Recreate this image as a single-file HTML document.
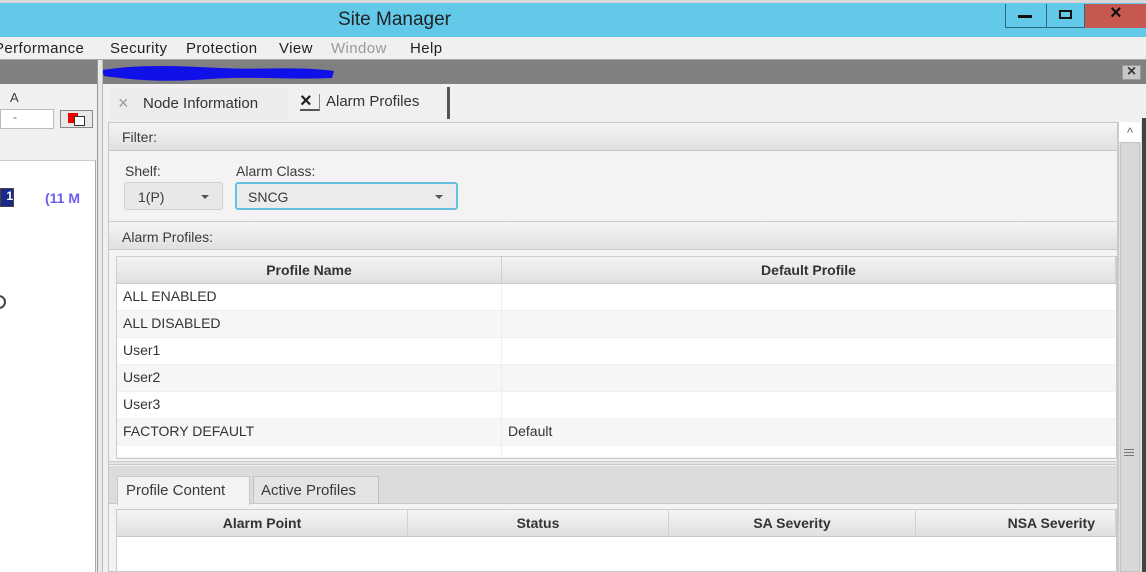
<!DOCTYPE html>
<html><head><meta charset="utf-8"><style>
*{margin:0;padding:0;box-sizing:border-box}
body{width:1146px;height:572px;overflow:hidden;background:#f0f0f0;font-family:"Liberation Sans",sans-serif;position:relative;color:#333}
.a{position:absolute}
.t{font-size:14px;color:#3a3a3a;white-space:nowrap}
.m{position:absolute;top:40px;font-size:15px;color:#222;letter-spacing:0.4px;white-space:nowrap}
.hdr{background:linear-gradient(#f4f4f4,#e0e0e0);border-bottom:1px solid #c8c8c8}
.th{font-weight:bold;font-size:14px;color:#333;text-align:center;line-height:26px;border-right:1px solid #d0d0d0}
.row{left:117px;width:999px;height:27px;border-bottom:1px solid #f0f0f0}
.row span{position:absolute;left:6px;top:4px;font-size:14px;color:#333}
.row b{position:absolute;left:384px;top:0;width:1px;height:27px;background:#eee}
</style></head><body>
<div class="a" style="left:0;top:0;width:1146px;height:3px;background:#d8d8d8"></div>
<div class="a" style="left:0;top:3px;width:1146px;height:34px;background:#62c9e9"></div>
<div class="a" style="left:338px;top:9px;font-size:19px;color:#222">Site Manager</div>
<div class="a" style="left:1005px;top:4px;width:42px;height:24px;border:1px solid #2a6a80;border-top:none;background:#62c9e9"></div>
<div class="a" style="left:1018px;top:15px;width:14px;height:3px;background:#111"></div>
<div class="a" style="left:1046px;top:4px;width:39px;height:24px;border:1px solid #2a6a80;border-top:none;background:#62c9e9"></div>
<div class="a" style="left:1059px;top:10px;width:13px;height:9px;border:2px solid #111"></div>
<div class="a" style="left:1085px;top:4px;width:61px;height:24px;background:#c75850"></div>
<div class="a" style="left:1110px;top:2px;font-size:20px;font-weight:bold;color:#111">×</div>
<div class="m" style="left:-6px">Performance</div>
<div class="m" style="left:110px">Security</div>
<div class="m" style="left:186px">Protection</div>
<div class="m" style="left:279px">View</div>
<div class="m" style="left:331px;color:#999">Window</div>
<div class="m" style="left:410px">Help</div>
<div class="a" style="left:0;top:59px;width:1146px;height:25px;background:#808080;border-top:1px solid #aaa"></div>
<svg class="a" style="left:100px;top:62px" width="240" height="22"><path d="M2 8 C40 2 80 4 120 6 S200 4 234 9 L232 16 C190 18 150 14 110 17 S40 19 4 14 Z" fill="#1010e8"/></svg>
<div class="a" style="left:1122px;top:65px;width:19px;height:15px;background:#c8c8c8;border:1px solid #999;font-size:16px;line-height:12px;text-align:center;font-weight:bold;color:#333">×</div>
<div class="a" style="left:0;top:84px;width:97px;height:488px;background:#f0f0f0"></div>
<div class="a t" style="left:10px;top:90px;font-size:13px">A</div>
<div class="a" style="left:0;top:109px;width:54px;height:20px;background:#fff;border:1px solid #bbb;font-size:12px;padding-left:12px;color:#666">-</div>
<div class="a" style="left:60px;top:110px;width:33px;height:18px;border:1px solid #888;background:#e8e8e8"></div>
<div class="a" style="left:68px;top:113px;width:10px;height:10px;background:#e00"></div>
<div class="a" style="left:74px;top:116px;width:11px;height:10px;background:#fff;border:1px solid #333"></div>
<div class="a" style="left:0;top:160px;width:96px;height:412px;background:#fff;border-right:1px solid #aaa;border-top:1px solid #ccc"></div>
<div class="a" style="left:0;top:188px;width:14px;height:19px;background:#1a2a8a;border:1px solid #444;color:#fff;font-size:12px;font-weight:bold;text-align:right">1</div>
<div class="a" style="left:45px;top:190px;font-size:14px;font-weight:bold;color:#6a5cf0">(11 M</div>
<div class="a" style="left:-8px;top:295px;width:14px;height:14px;border:2px solid #444;border-radius:50%"></div>
<div class="a" style="left:97px;top:60px;width:6px;height:512px;background:#e8e8e8;border-left:1px solid #999;border-right:1px solid #bbb"></div>
<div class="a" style="left:110px;top:89px;width:178px;height:30px;background:#ececec"></div>
<div class="a" style="left:118px;top:97px;width:16px;height:14px;color:#999;font-size:18px;line-height:13px">×</div>
<div class="a t" style="left:143px;top:95px;font-size:15px;color:#333">Node Information</div>
<div class="a" style="left:300px;top:94px;width:20px;height:17px;border-bottom:2px solid #555;border-right:1px solid #888;font-size:20px;line-height:14px;font-weight:bold;color:#222">×</div>
<div class="a t" style="left:326px;top:93px;font-size:15px;color:#333">Alarm Profiles</div>
<div class="a" style="left:447px;top:87px;width:3px;height:32px;background:#555"></div>
<div class="a" style="left:108px;top:122px;width:1010px;height:450px;background:#f3f3f3;border:1px solid #c8c8c8"></div>
<div class="a hdr" style="left:109px;top:123px;width:1008px;height:28px"></div>
<div class="a t" style="left:122px;top:129px">Filter:</div>
<div class="a t" style="left:125px;top:163px">Shelf:</div>
<div class="a t" style="left:236px;top:163px">Alarm Class:</div>
<div class="a" style="left:124px;top:182px;width:99px;height:28px;background:#e8e8e8;border:1px solid #d0d0d0;border-radius:3px"></div>
<div class="a t" style="left:138px;top:189px">1(P)</div>
<div class="a" style="left:201px;top:195px;border:4px solid transparent;border-top:4px solid #555"></div>
<div class="a" style="left:235px;top:182px;width:223px;height:28px;background:#ebebeb;border:2px solid #6ac0e0;border-radius:3px"></div>
<div class="a t" style="left:248px;top:189px">SNCG</div>
<div class="a" style="left:435px;top:195px;border:4px solid transparent;border-top:4px solid #555"></div>
<div class="a" style="left:109px;top:221px;width:1008px;height:1px;background:#ccc"></div>
<div class="a hdr" style="left:109px;top:223px;width:1008px;height:27px"></div>
<div class="a t" style="left:122px;top:229px">Alarm Profiles:</div>
<div class="a" style="left:116px;top:256px;width:1001px;height:203px;background:#fff;border:1px solid #ccc"></div>
<div class="a hdr th" style="left:117px;top:257px;width:385px;height:27px">Profile Name</div>
<div class="a hdr th" style="left:502px;top:257px;width:614px;height:27px">Default Profile</div>
<div class="a row" style="top:284px;background:#fff"><span>ALL ENABLED</span><b></b></div>
<div class="a row" style="top:311px;background:#f6f6f6"><span>ALL DISABLED</span><b></b></div>
<div class="a row" style="top:338px;background:#fff"><span>User1</span><b></b></div>
<div class="a row" style="top:365px;background:#f6f6f6"><span>User2</span><b></b></div>
<div class="a row" style="top:392px;background:#fff"><span>User3</span><b></b></div>
<div class="a row" style="top:419px;background:#f6f6f6"><span>FACTORY DEFAULT</span><b></b><span style="left:391px">Default</span></div>
<div class="a row" style="top:446px;height:12px;background:#fff"><b style="height:12px"></b></div>
<div class="a" style="left:109px;top:461px;width:1008px;height:4px;background:#e4e4e4;border-top:1px solid #ccc;border-bottom:1px solid #ccc"></div>
<div class="a" style="left:109px;top:466px;width:1008px;height:38px;background:#dcdcdc;border-bottom:1px solid #c8c8c8"></div>
<div class="a" style="left:117px;top:476px;width:133px;height:29px;background:#f3f3f3;border:1px solid #c8c8c8;border-bottom:none"></div>
<div class="a t" style="left:126px;top:482px;font-size:15px">Profile Content</div>
<div class="a" style="left:253px;top:476px;width:126px;height:27px;background:#e4e4e4;border:1px solid #c0c0c0;border-bottom:none"></div>
<div class="a t" style="left:261px;top:482px;font-size:15px">Active Profiles</div>
<div class="a" style="left:116px;top:509px;width:1001px;height:63px;background:#fff;border:1px solid #ccc"></div>
<div class="a hdr th" style="left:117px;top:510px;width:291px;height:27px">Alarm Point</div>
<div class="a hdr th" style="left:408px;top:510px;width:261px;height:27px">Status</div>
<div class="a hdr th" style="left:669px;top:510px;width:247px;height:27px">SA Severity</div>
<div class="a hdr th" style="left:916px;top:510px;width:200px;height:27px;text-align:right;padding-right:20px">NSA Severity</div>
<div class="a" style="left:1118px;top:122px;width:24px;height:450px;background:#e0e0e0;border-left:1px solid #ccc"></div>
<div class="a" style="left:1119px;top:122px;width:22px;height:20px;background:#fff;color:#666;font-size:13px;text-align:center;line-height:22px">^</div>
<div class="a" style="left:1120px;top:142px;width:20px;height:430px;background:#d8d8d8;border:1px solid #c4c4c4"></div>
<div class="a" style="left:1124px;top:449px;width:10px;height:7px;border-top:1px solid #777;border-bottom:1px solid #777"></div>
<div class="a" style="left:1124px;top:452px;width:10px;height:1px;background:#777"></div>
<div class="a" style="left:1142px;top:118px;width:4px;height:454px;background:#444"></div>
</body></html>
